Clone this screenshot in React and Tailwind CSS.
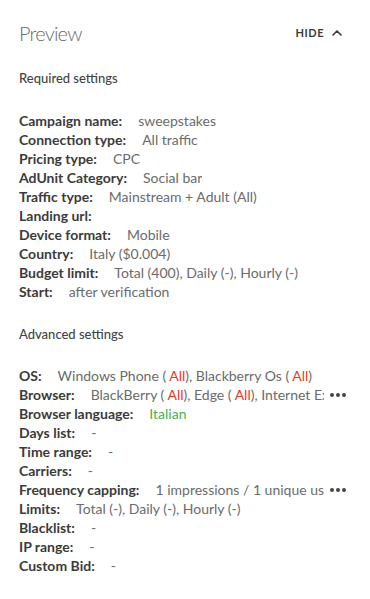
import { ChevronUp } from "lucide-react";

const required = [
  { label: "Campaign name:", value: "sweepstakes" },
  { label: "Connection type:", value: "All traffic" },
  { label: "Pricing type:", value: "CPC" },
  { label: "AdUnit Category:", value: "Social bar" },
  { label: "Traffic type:", value: "Mainstream + Adult (All)" },
  { label: "Landing url:", value: "" },
  { label: "Device format:", value: "Mobile" },
  { label: "Country:", value: "Italy ($0.004)" },
  { label: "Budget limit:", value: "Total (400), Daily (-), Hourly (-)" },
  { label: "Start:", value: "after verification" },
];

function All() {
  return <span className="text-[#e53a2f]">All</span>;
}

function Dots() {
  return (
    <span className="flex shrink-0 items-center gap-[2px] ml-[6px]">
      <span className="w-[4px] h-[4px] rounded-full bg-[#444]" />
      <span className="w-[4px] h-[4px] rounded-full bg-[#444]" />
      <span className="w-[4px] h-[4px] rounded-full bg-[#444]" />
    </span>
  );
}

function Row({ label, children, more = false }) {
  return (
    <div className="flex items-center h-[19px] w-[327px]">
      <span className="font-bold text-[#3b3b3b] shrink-0 mr-[16px]">{label}</span>
      <span className="text-[#6b6b6b] whitespace-nowrap overflow-hidden min-w-0">
        {children}
      </span>
      {more && <Dots />}
    </div>
  );
}

export default function App() {
  return (
    <div
      className="w-[370px] h-[599px] bg-white pl-[19px] pr-[25px] text-[14px]"
      style={{ fontFamily: "Lato, 'Open Sans', sans-serif" }}
    >
      <div className="flex items-center justify-between h-[66px]">
        <h1 className="text-[20px] font-light text-[#6a6a6a] tracking-[-0.8px]">Preview</h1>
        <button className="flex items-center gap-[5px] text-[11px] font-bold text-[#3b3b3b] tracking-[0.5px]">
          HIDE
          <ChevronUp size={16} strokeWidth={2.5} />
        </button>
      </div>

      <h2 className="mt-[2px] text-[13px] font-medium text-[#444] h-[20px] leading-[20px]">
        Required settings
      </h2>
      <div className="mt-[23px] flex flex-col">
        {required.map((r) => (
          <Row key={r.label} label={r.label}>
            {r.value}
          </Row>
        ))}
      </div>

      <h2 className="mt-[23px] text-[13px] font-medium text-[#444] h-[20px] leading-[20px]">
        Advanced settings
      </h2>
      <div className="mt-[22px] flex flex-col">
        <Row label="OS:">
          Windows Phone ( <All />), Blackberry Os ( <All />)
        </Row>
        <Row label="Browser:" more>
          BlackBerry ( <All />), Edge ( <All />), Internet Explorer ( <All />)
        </Row>
        <Row label="Browser language:">
          <span className="text-[#4caf50]">Italian</span>
        </Row>
        <Row label="Days list:">-</Row>
        <Row label="Time range:">-</Row>
        <Row label="Carriers:">-</Row>
        <Row label="Frequency capping:" more>
          1 impressions / 1 unique user per 24 hours
        </Row>
        <Row label="Limits:">Total (-), Daily (-), Hourly (-)</Row>
        <Row label="Blacklist:">-</Row>
        <Row label="IP range:">-</Row>
        <Row label="Custom Bid:">-</Row>
      </div>
    </div>
  );
}
